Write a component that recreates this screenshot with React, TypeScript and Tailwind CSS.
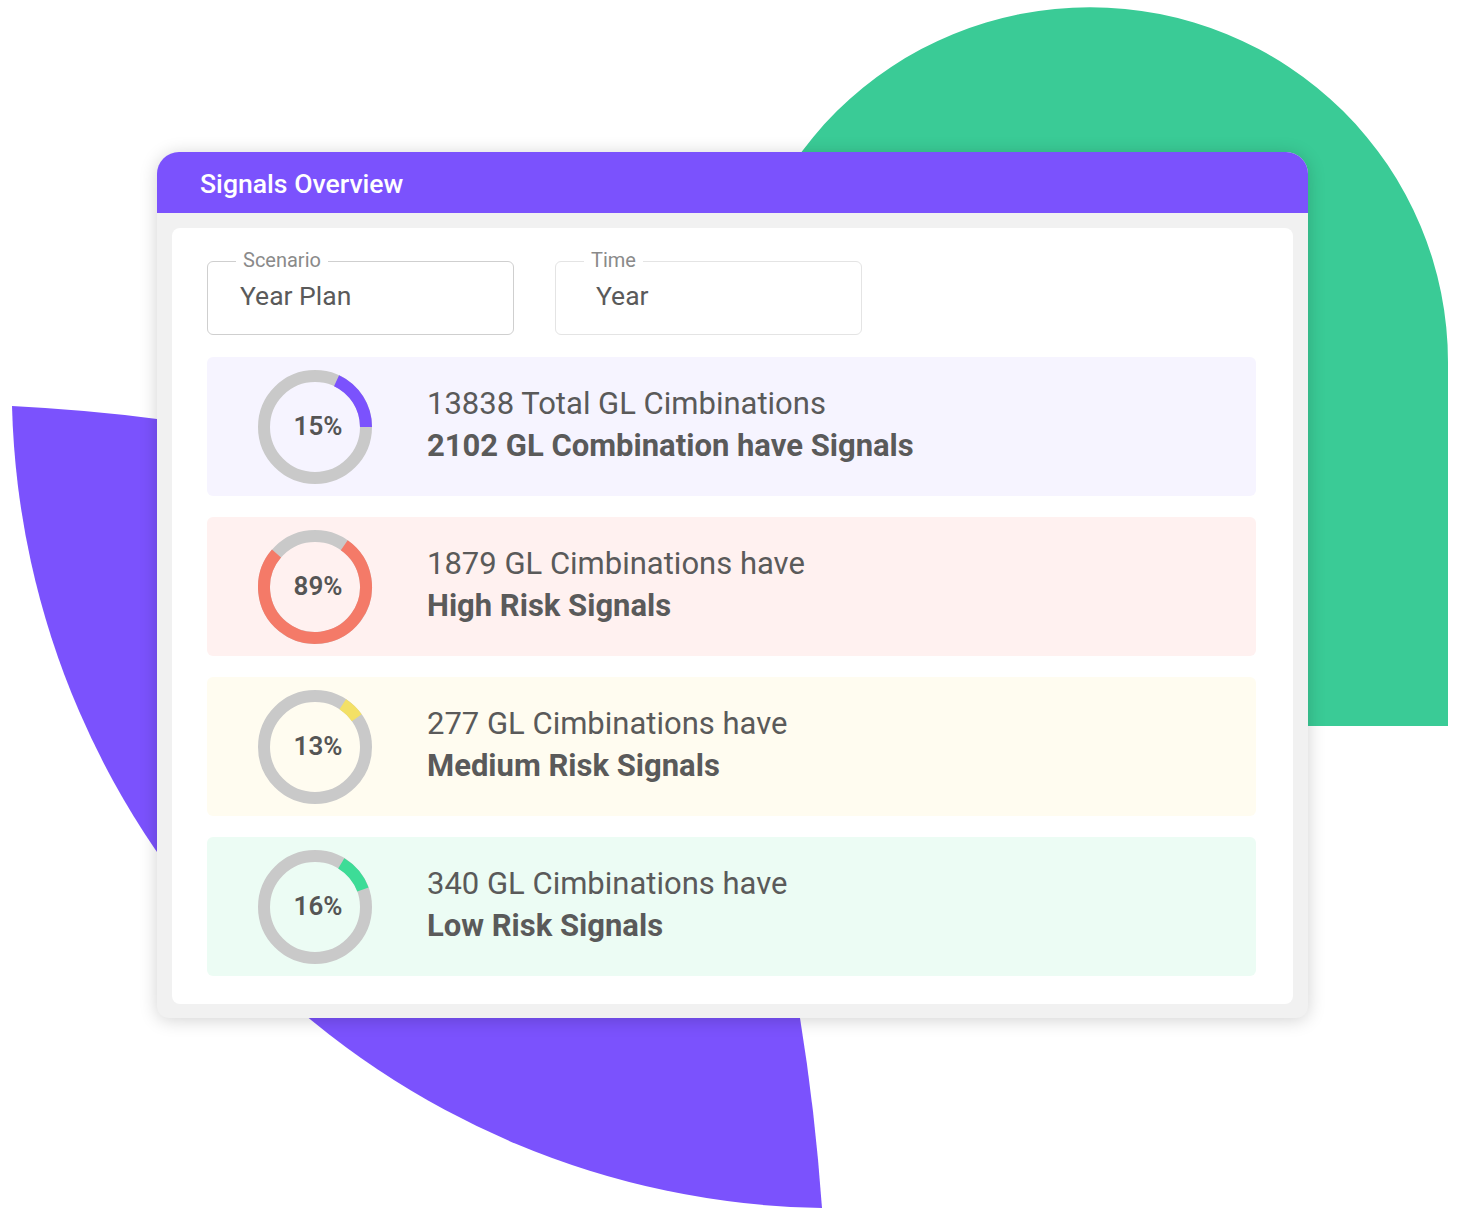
import React from 'react';

interface SignalRow {
  pct: number;
  start: number;
  end: number;
  color: string;
  bg: string;
  line1: string;
  line2: string;
}

const rows: SignalRow[] = [
  { pct: 15, start: 25, end: 90, color: '#7b52fd', bg: 'bg-[#f6f4ff]', line1: '13838 Total GL Cimbinations', line2: '2102 GL Combination have Signals' },
  { pct: 89, start: 35, end: 311, color: '#f47a68', bg: 'bg-[#fff1f0]', line1: '1879 GL Cimbinations have', line2: 'High Risk Signals' },
  { pct: 13, start: 33, end: 55, color: '#f3e066', bg: 'bg-[#fffcf0]', line1: '277 GL Cimbinations have', line2: 'Medium Risk Signals' },
  { pct: 16, start: 31, end: 70, color: '#3ddc97', bg: 'bg-[#ecfcf4]', line1: '340 GL Cimbinations have', line2: 'Low Risk Signals' },
];

// angle in degrees, clockwise from 12 o'clock
function point(cx: number, cy: number, r: number, deg: number) {
  const a = ((deg - 90) * Math.PI) / 180;
  return [cx + r * Math.cos(a), cy + r * Math.sin(a)];
}

function Donut({ pct, start, end, color }: { pct: number; start: number; end: number; color: string }) {
  const c = 58;
  const r = 51;
  const [x1, y1] = point(c, c, r, start);
  const [x2, y2] = point(c, c, r, end);
  const large = end - start > 180 ? 1 : 0;
  return (
    <svg width="116" height="116" viewBox="0 0 116 116" className="shrink-0">
      <circle cx={c} cy={c} r={r} fill="none" stroke="#c9c9c9" strokeWidth="12" />
      <path d={`M ${x1} ${y1} A ${r} ${r} 0 ${large} 1 ${x2} ${y2}`} fill="none" stroke={color} strokeWidth="12" />
      <text x={c + 3} y={c + 8} textAnchor="middle" fontSize="26" fontWeight="600" fill="#555555" fontFamily="Roboto, sans-serif">
        {pct}%
      </text>
    </svg>
  );
}

function OutlinedField({ label, value, valuePad, borderClass }: { label: string; value: string; valuePad: string; borderClass: string }) {
  return (
    <div className={`relative w-[307px] h-[74px] rounded-[6px] border ${borderClass} flex items-center ${valuePad}`}>
      <span className="absolute -top-[15px] left-[28px] bg-white px-[7px] text-[20px] leading-[26px] text-[#8a8a8a]">
        {label}
      </span>
      <span className="text-[26.5px] leading-[30px] text-[#5a5a5a] pb-[4px]">{value}</span>
    </div>
  );
}

export default function App() {
  return (
    <div className="relative w-[1459px] h-[1219px] bg-white overflow-hidden font-['Roboto',sans-serif]">
      <svg className="absolute inset-0" width="1459" height="1219" viewBox="0 0 1459 1219">
        <path d="M 732 726 L 732 362 A 358 355 0 0 1 1448 362 L 1448 726 Z" fill="#3acb96" />
        <path
          d="M 12 406 Q 90 410 157 419 L 700 500 L 800 1018 Q 815 1110 822 1208 A 823 823 0 0 1 12 406 Z"
          fill="#7b52fd"
        />
      </svg>

      <div className="relative pt-[152px] pl-[157px]">
        <div className="w-[1151px] rounded-t-[22px] rounded-b-[12px] bg-[#f1f1f1] shadow-[0_2px_18px_rgba(0,0,0,0.18)]">
          <div className="h-[61px] bg-[#7b52fd] rounded-t-[22px] flex items-center pl-[43px] pt-[3px] text-white text-[26.6px] font-medium">
            Signals Overview
          </div>
          <div className="px-[15px] pt-[15px] pb-[14px]">
            <div className="bg-white rounded-[8px] pl-[35px] pr-[37px] pt-[33px] pb-[28px]">
              <div className="flex gap-[41px]">
                <OutlinedField label="Scenario" value="Year Plan" valuePad="pl-[32px]" borderClass="border-[#cfcfcf]" />
                <OutlinedField label="Time" value="Year" valuePad="pl-[40px]" borderClass="border-[#e4e4e4]" />
              </div>
              <div className="mt-[22px] flex flex-col gap-[21px]">
                {rows.map((row) => (
                  <div key={row.line1} className={`h-[139px] rounded-[6px] ${row.bg} flex items-center pl-[50px]`}>
                    <Donut pct={row.pct} start={row.start} end={row.end} color={row.color} />
                    <div className="ml-[54px] text-[31px] leading-[42px] text-[#5a5a5a] pb-[3px]">
                      <div>{row.line1}</div>
                      <div className="font-bold">{row.line2}</div>
                    </div>
                  </div>
                ))}
              </div>
            </div>
          </div>
        </div>
      </div>
    </div>
  );
}
